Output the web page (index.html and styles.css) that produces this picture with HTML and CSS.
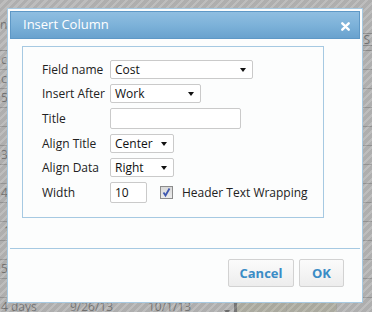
FILE: index.html
```html
<!DOCTYPE html>
<html lang="en">
<head>
    <meta charset="UTF-8">
    <title>Insert Column</title>
    <link rel="stylesheet" href="styles.css">
</head>
<body>
    <!-- Grid behind the modal overlay -->
    <div class="grid">
        <div class="grid-toolbar"></div>
        <div class="grid-head">
            <span class="head-left">n</span>
            <span class="head-right">S</span>
        </div>
        <div class="grid-row"><span class="cell-name">cost</span></div>
        <div class="grid-row"><span class="cell-name">cost</span></div>
        <div class="grid-row"><span class="cell-name">5 days</span></div>
        <div class="grid-row"><span class="cell-name"></span></div>
        <div class="grid-row"><span class="cell-name"></span></div>
        <div class="grid-row"><span class="cell-name">3 days</span></div>
        <div class="grid-row"><span class="cell-name"></span></div>
        <div class="grid-row"><span class="cell-name">4 days</span></div>
        <div class="grid-row"><span class="cell-name"></span></div>
        <div class="grid-row"><span class="cell-name">&nbsp;1 day</span></div>
        <div class="grid-row"><span class="cell-name"></span></div>
        <div class="grid-row"><span class="cell-name">5 days</span></div>
        <div class="grid-row"><span class="cell-name"></span></div>
        <div class="grid-row last">
            <span class="cell-name">4 days</span>
            <span class="cell-date">9/26/13</span>
            <span class="cell-date">10/1/13</span>
            <span class="cell-drop"><span class="caret"></span></span>
            <span class="cell-gantt"></span>
            <span class="cell-gantt"></span>
        </div>
    </div>

    <div class="overlay"></div>

    <!-- Insert Column dialog -->
    <div class="dialog">
        <div class="dialog-titlebar">
            <span class="dialog-title">Insert Column</span>
            <svg class="dialog-close" viewBox="0 0 9 9" width="9" height="9">
                <path d="M1.3 1.3 L7.7 7.7 M7.7 1.3 L1.3 7.7" />
            </svg>
        </div>

        <div class="dialog-content">
            <div class="fieldset">
                <div class="form-grid">
                    <label>Field name</label>
                    <div class="select select-wide"><span>Cost</span><span class="caret"></span></div>

                    <label>Insert After</label>
                    <div class="select select-mid"><span>Work</span><span class="caret"></span></div>

                    <label>Title</label>
                    <input class="text-input title-input" type="text">

                    <label>Align Title</label>
                    <div class="select select-small"><span>Center</span><span class="caret"></span></div>

                    <label>Align Data</label>
                    <div class="select select-small"><span>Right</span><span class="caret"></span></div>

                    <label>Width</label>
                    <div class="width-row">
                        <input class="text-input width-input" type="text" value="10">
                        <span class="checkbox">
                            <svg viewBox="0 0 11 11" width="11" height="11">
                                <path d="M2.5 5.5 L4.5 8.5 L8.5 1.5" />
                            </svg>
                        </span>
                        <span class="check-label">Header Text Wrapping</span>
                    </div>
                </div>
            </div>
        </div>

        <div class="dialog-buttons">
            <button class="btn btn-cancel">Cancel</button>
            <button class="btn btn-ok">OK</button>
        </div>
    </div>
</body>
</html>
```

FILE: styles.css
```css
* {
    margin: 0;
    padding: 0;
    box-sizing: border-box;
}

body {
    width: 372px;
    height: 312px;
    overflow: hidden;
    position: relative;
    background: #fff;
    font-family: "Open Sans", "Noto Sans", sans-serif;
    font-size: 12px;
    color: #222;
}

/* Grid underneath */
.grid {
    color: #222;
    font-size: 12px;
}

.grid-toolbar {
    height: 15px;
}

.grid-head {
    height: 36px;
    display: flex;
    justify-content: space-between;
    border-bottom: 1px solid #777;
}

.head-left {
    padding-top: 1px;
}

.head-right {
    margin-top: 18px;
    height: 13px;
    line-height: 12px;
    padding: 0 2px;
    border-top: 1px solid #777;
    border-bottom: 1px solid #777;
}

.grid-row {
    height: 19px;
    display: flex;
    align-items: center;
    border-bottom: 1px solid #999;
    line-height: 18px;
}

.cell-name {
    width: 62px;
    padding-left: 1px;
    white-space: nowrap;
}

.cell-date {
    width: 78px;
    padding-left: 8px;
}

.cell-drop {
    width: 17px;
    height: 19px;
    display: flex;
    justify-content: center;
    align-items: flex-end;
    padding-bottom: 3px;
    border-right: 3px solid #333;
    margin-left: 2px;
}

.cell-gantt {
    width: 50px;
    height: 19px;
    background: #eeecc6;
    border-right: 1px solid #d6d6c0;
}

.overlay {
    position: absolute;
    inset: 0;
    opacity: 0.72;
    background: repeating-linear-gradient(135deg, #8f8f8f 0 3.5px, #a3a3a3 3.5px 5.66px);
}

/* Dialog */
.dialog {
    position: absolute;
    left: 7px;
    top: 8px;
    width: 356px;
    height: 295px;
    padding: 2px;
    border: 1px solid #a6c9e2;
    background: #fcfdfd;
    display: flex;
    flex-direction: column;
}

.dialog-titlebar {
    height: 28px;
    flex-shrink: 0;
    display: flex;
    justify-content: space-between;
    align-items: center;
    padding: 0 9px 0 12px;
    border: 1px solid #5e98c6;
    background: linear-gradient(to bottom, #8fbee1 0%, #7db2d9 50%, #69a2ce 100%);
    color: #fff;
}

.dialog-title {
    font-size: 13px;
    padding-bottom: 2px;
}

.dialog-close {
    margin-top: 2px;
    stroke: #fff;
    stroke-width: 2.4;
    stroke-linecap: round;
    fill: none;
}

.dialog-content {
    height: 210px;
    flex-shrink: 0;
    padding: 7px 0 0 12px;
    border-bottom: 1px solid #a6c9e2;
}

.fieldset {
    width: 302px;
    border: 1px solid #a6c9e2;
    padding: 13px 0 14px 19px;
}

.form-grid {
    display: grid;
    grid-template-columns: 68px auto;
    row-gap: 5px;
    align-items: center;
    justify-items: start;
}

.form-grid label {
    color: #222;
    line-height: 16px;
}

.select {
    height: 19px;
    display: flex;
    justify-content: space-between;
    align-items: center;
    padding: 0 6px 0 4px;
    border: 1px solid #cacaca;
    border-radius: 2px;
    background: #fff;
    color: #111;
}

.select-wide {
    width: 143px;
}

.select-mid {
    width: 91px;
}

.select-small {
    width: 64px;
}

.caret {
    width: 0;
    height: 0;
    border-left: 3.5px solid transparent;
    border-right: 3.5px solid transparent;
    border-top: 4px solid #111;
}

.text-input {
    height: 21px;
    border: 1px solid #cacaca;
    border-radius: 2px;
    background: #fff;
    font-family: inherit;
    font-size: 12px;
    color: #111;
    padding: 0 4px;
    outline: none;
}

.title-input {
    width: 131px;
}

.width-input {
    width: 37px;
}

.width-row {
    display: flex;
    align-items: center;
}

.checkbox {
    width: 13px;
    height: 13px;
    margin-left: 13px;
    border: 1px solid #8c8c8c;
    background: linear-gradient(to bottom, #d8d8d8, #ececec);
    display: flex;
}

.checkbox path {
    fill: none;
    stroke: #3f58b0;
    stroke-width: 1.8;
}

.check-label {
    margin-left: 9px;
    color: #222;
}

/* Buttons */
.dialog-buttons {
    display: flex;
    justify-content: flex-end;
    gap: 5px;
    padding: 10px 16px 13px 0;
}

.btn {
    height: 28px;
    border: 1px solid #d2d2d2;
    border-radius: 2px;
    background: linear-gradient(to bottom, #fbfbfb, #ededed);
    color: #3a8cc6;
    font-family: inherit;
    font-size: 13px;
    font-weight: bold;
    cursor: pointer;
}

.btn-cancel {
    width: 66px;
}

.btn-ok {
    width: 45px;
}
```
